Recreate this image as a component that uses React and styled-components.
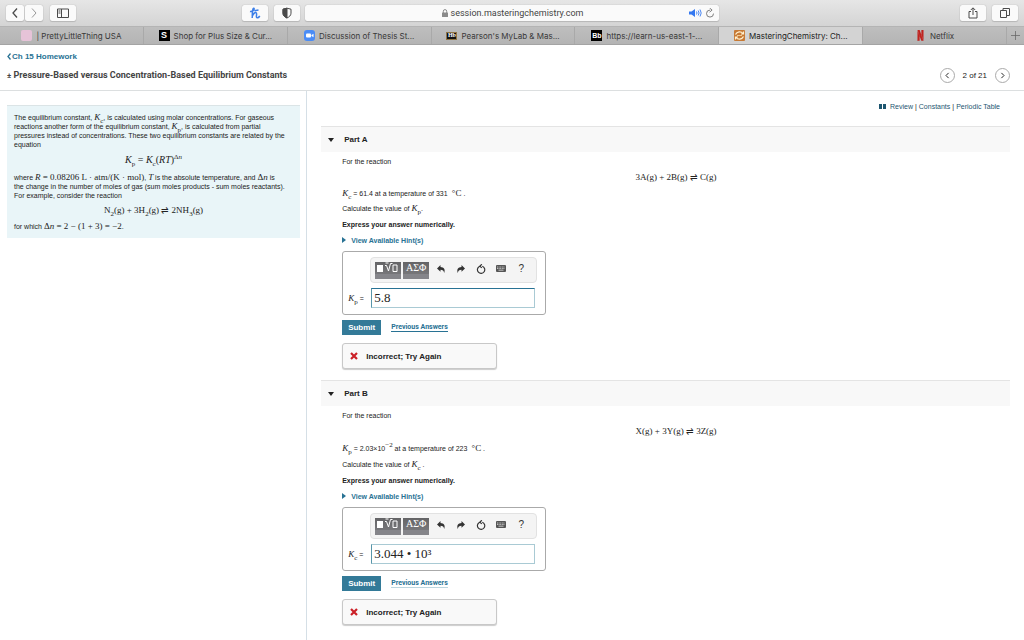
import React from 'react';
import styled, { createGlobalStyle } from 'styled-components';
import { SiNetflix } from 'react-icons/si';

const sans = '"Liberation Sans", Arial, sans-serif';
const serif = '"Liberation Serif", "Times New Roman", serif';
const system = 'Inter, "Open Sans", sans-serif';
const narrow = 'Roboto, "Liberation Sans", sans-serif';

const GlobalStyle = createGlobalStyle`
  * {
    box-sizing: border-box;
  }
  body {
    margin: 0;
    background: #fff;
    color: #222;
    font-family: ${sans};
    font-size: 7px;
  }
  button {
    border: 0;
    padding: 0;
    background: none;
    color: inherit;
    font: inherit;
    cursor: pointer;
  }
  a {
    text-decoration: none;
  }
  svg {
    display: block;
  }
`;

const Page = styled.div`
  display: flex;
  flex-direction: column;
  min-height: 100vh;
`;

const BrowserBar = styled.div`
  display: grid;
  grid-template-columns: 1fr 41% 1fr;
  gap: 5px;
  padding: 5px 6px;
  background: linear-gradient(#e6e6e6, #d4d4d4);
  border-bottom: 1px solid #b4b4b4;
`;

const BarGroup = styled.div`
  display: flex;
  gap: ${(props) => props.$gap}px;
`;

const BarSide = styled.div`
  display: flex;
  justify-content: ${(props) => props.$justify || 'space-between'};
`;

const BarButton = styled.button`
  display: flex;
  align-items: center;
  justify-content: center;
  width: ${(props) => (props.$narrow ? 18 : 26)}px;
  height: 16px;
  border-radius: 2px;
  background: #fafafa;
  box-shadow: 0 0 1px #999, 0 1px 1px #bbb;
  color: ${(props) => props.$color || '#4a4a4a'};
`;

const AddressBar = styled.div`
  display: flex;
  align-items: center;
  height: 16px;
  padding: 0 4px;
  gap: 3px;
  border-radius: 2px;
  background: #fafafa;
  box-shadow: 0 0 1px #999, 0 1px 1px #bbb;
  color: #666;
`;

const Address = styled.div`
  flex: 1;
  display: flex;
  align-items: center;
  justify-content: center;
  gap: 3px;
  padding-left: 30px;
  font: 9px/16px ${narrow};
  color: #444;
`;

const Tabs = styled.nav`
  display: flex;
  height: 18px;
  border-bottom: 1px solid #a4a4a4;
  background: linear-gradient(#bebebe, #b4b4b4);
`;

const Tab = styled.a`
  flex: 1;
  display: flex;
  align-items: center;
  justify-content: center;
  gap: 4px;
  border-right: 1px solid #a9a9a9;
  background: ${(props) => (props.$active ? '#d3d3d3' : 'transparent')};
  color: ${(props) => (props.$active ? '#222' : '#383838')};
  font: 8px/16px ${system};
  white-space: nowrap;
`;

const NewTab = styled.button`
  display: flex;
  align-items: center;
  justify-content: center;
  width: 17px;
  color: #666;
`;

const Favicon = styled.span`
  display: flex;
  align-items: center;
  justify-content: center;
  width: 11px;
  height: ${(props) => props.$height || 11}px;
  border-radius: ${(props) => props.$radius || 0}px;
  border: ${(props) => (props.$border ? `1px solid ${props.$border}` : '0')};
  background: ${(props) => props.$bg || 'transparent'};
  color: #fff;
  font: bold ${(props) => props.$size || 9}px/11px ${(props) => props.$font || sans};
`;

const PageHeader = styled.header`
  display: flex;
  justify-content: space-between;
  height: 46px;
  padding: 6px 14px 0 7px;
  border-bottom: 1px solid #dcdfe0;
`;

const BackLink = styled.a`
  display: flex;
  align-items: center;
  gap: 1px;
  color: #287294;
  font: bold 8px/11px ${sans};
`;

const Title = styled.h1`
  margin: 8px 0 0;
  color: #444;
  font: bold 9px/11px ${narrow};

  span {
    font-size: 8px;
  }
`;

const Pager = styled.div`
  display: flex;
  align-items: center;
  gap: 8px;
  height: 15px;
  margin-top: 17px;
  font-size: 8px;
`;

const PagerButton = styled.button`
  display: flex;
  align-items: center;
  justify-content: center;
  width: 15px;
  height: 15px;
  border: 1px solid #aaa;
  border-radius: 50%;
`;

const Columns = styled.main`
  flex: 1;
  display: grid;
  grid-template-columns: 3fr 7fr;
`;

const Sidebar = styled.aside`
  padding: 14px 6px 0 7px;
  border-right: 1px solid #d5dfe6;
`;

const Intro = styled.section`
  padding: 7px;
  border-top: 1px solid #dbe4e6;
  background: #e9f5f8;
  line-height: 9px;
  white-space: nowrap;

  p {
    margin: 0;
  }
`;

const IntroEquation = styled.div`
  margin: ${(props) => (props.$late ? '5px 0 5px' : '6px 0 6px')};
  text-align: center;
  line-height: 12px;
`;

const MathText = styled.span`
  font-family: ${serif};
  font-size: ${(props) => props.$size || 9}px;
  line-height: 1;

  sub,
  sup {
    font-size: 7px;
    line-height: 0;
  }
`;

const Content = styled.div`
  padding: 0 14px;
`;

const Resources = styled.div`
  display: flex;
  align-items: center;
  justify-content: flex-end;
  gap: 2px;
  height: 35px;
  padding: 0 10px 4px 0;

  a {
    color: #1d5670;
  }
  svg {
    margin-right: 2px;
  }
`;

const Part = styled.section`
  margin-bottom: 11px;
`;

const PartHeader = styled.h2`
  margin: 0;
  border-top: 1px solid #e4e4e4;
  background: #f8f8f8;
`;

const PartToggle = styled.button`
  display: flex;
  align-items: center;
  gap: 10px;
  width: 100%;
  height: 25px;
  padding-left: 7px;
  font: bold 8px/12px ${sans};
`;

const PartBody = styled.div`
  padding: 2px 0 0 21px;
`;

const Line = styled.p`
  margin: 0;
  height: ${(props) => props.$height || 16}px;
  line-height: ${(props) => props.$height || 16}px;
  font-weight: ${(props) => (props.$bold ? 'bold' : 'normal')};
  text-align: ${(props) => (props.$center ? 'center' : 'left')};
`;

const HintToggle = styled.button`
  display: flex;
  align-items: center;
  gap: 5px;
  height: 16px;
  color: #287294;
  font-weight: bold;
`;

const Editor = styled.div`
  display: grid;
  grid-template-columns: 22px 167px;
  row-gap: 5px;
  align-items: center;
  width: fit-content;
  margin-top: 3px;
  padding: 5px 8px 6px 5px;
  border: 1px solid #aaa;
  border-radius: 3px;
`;

const EditorTools = styled.div`
  grid-column: 2;
  display: flex;
  align-items: center;
  height: 26px;
  padding-left: 4px;
  border: 1px solid #e2e2e2;
  border-radius: 4px;
  background: #f4f4f4;
`;

const Palette = styled.button`
  width: 26px;
  height: 17px;
  margin-right: 2px;
  border-bottom: 5px solid #85858a;
  background: linear-gradient(#646466, #77777a);
  color: #fff;
  font: 10px/11px ${serif};
  overflow: hidden;
`;

const Tool = styled.button`
  display: flex;
  align-items: center;
  justify-content: center;
  width: 20px;
  height: 18px;
  padding-bottom: 3px;
  color: #333;
  font-size: 10px;
`;

const AnswerInput = styled.input`
  width: 164px;
  height: 20px;
  margin-left: 1px;
  padding: 0 2px;
  border: 1px solid #a9cad4;
  border-top-color: ${(props) => (props.$active ? '#287294' : '#a9cad4')};
  border-left-color: #5896aa;
  border-radius: 0;
  outline: 0;
  background: #fff;
  color: #222;
  font: 13px/18px ${serif};
`;

const Actions = styled.div`
  display: flex;
  align-items: center;
  gap: 10px;
  margin-top: 5px;
`;

const Submit = styled.button`
  width: 39px;
  height: 15px;
  background: #337a98;
  color: #fff;
  font-size: 8px;
  font-weight: bold;
`;

const Previous = styled.a`
  border-bottom: 1px solid ${(props) => (props.$active ? '#287294' : '#bcd6df')};
  color: #287294;
  font: bold 7px/7px ${narrow};
`;

const Feedback = styled.div`
  display: flex;
  align-items: center;
  gap: 8px;
  width: 155px;
  height: 26px;
  margin-top: 8px;
  padding-left: 7px;
  border: 1px solid #c8c8c8;
  border-radius: 3px;
  background: #f9f9f9;
  box-shadow: 0 1px 1px #ccc;
  font-size: 8px;
  font-weight: bold;
`;

function Stroke({ d, size = 12, width = 1 }) {
  return (
    <svg width={size} height={size} viewBox="0 0 12 12" fill="none" stroke="currentColor" strokeWidth={width} aria-hidden="true">
      <path d={d} />
    </svg>
  );
}

function Shield() {
  return (
    <svg width="12" height="12" viewBox="0 0 12 12" fill="none" stroke="currentColor" aria-hidden="true">
      <path d="M6 1.2 10 2.2v4C10 8.5 8.2 10 6 11 3.8 10 2 8.5 2 6.2v-4z" />
      <path d="M6 1.2V11C3.8 10 2 8.5 2 6.2v-4z" fill="currentColor" />
    </svg>
  );
}

function Camera() {
  return (
    <svg width="9" height="9" viewBox="0 0 9 9" fill="#fff" aria-hidden="true">
      <rect x="1" y="2.5" width="5" height="4" rx="1" />
      <path d="M6.5 4 8.5 2.7v3.6L6.5 5z" />
    </svg>
  );
}

function ChemistryLogo() {
  return (
    <svg width="11" height="11" viewBox="0 0 11 11" aria-hidden="true">
      <rect width="11" height="11" rx="1" fill="#c77a35" />
      <path d="M1.5 4.5C3 1.3 7 1 9 3.5M9.5 1.5V4H7M9.5 6.5C8 9.700 4 10 2 7.500M1.500 9.500V7H4" fill="none" stroke="#fff0cf" strokeWidth="1.2" />
      <path d="M3 5.5h5" stroke="#f3c88e" />
    </svg>
  );
}

function BrowserToolbar() {
  return (
    <BrowserBar>
      <BarSide>
        <BarGroup $gap={7}>
          <BarGroup $gap={1}>
            <BarButton $narrow aria-label="Back"><Stroke width={1.3} d="M8 1.5 4 6l4 4.5" /></BarButton>
            <BarButton $narrow $color="#999" aria-label="Forward"><Stroke d="M4 1.5 8 6l-4 4.5" /></BarButton>
          </BarGroup>
          <BarButton aria-label="Sidebar"><Stroke d="M.5 2h11v8.500H.5zM4.500 2v8.500M1.500 4h2M1.500 6h2" /></BarButton>
        </BarGroup>
        <BarGroup $gap={6}>
          <BarButton $color="#3c7fe8" aria-label="Honey">
            <Stroke width={1.5} d="M1 4.500C3 5 5.800 2.800 5 1.300 4 .3 3.200 4 3.200 11M3.200 9.500C4 7 6 5 7.200 5.800 8.500 7 6.300 10.500 8 10.800 9.200 11 10.300 9.800 10.800 9M5.500 3.800 9.500 3" />
          </BarButton>
          <BarButton aria-label="Privacy"><Shield /></BarButton>
        </BarGroup>
      </BarSide>
      <AddressBar>
        <Address>
          <svg width="6" height="8" viewBox="0 0 6 8" aria-hidden="true">
            <rect y="3.5" width="6" height="4.5" rx="0.5" fill="#8a8a8a" />
            <path d="M1.3 4V2.300a1.700 1.700 0 0 1 3.400 0V4" fill="none" stroke="#8a8a8a" />
          </svg>
          session.masteringchemistry.com
        </Address>
        <svg width="13" height="10" viewBox="0 0 13 10" aria-label="Audio playing">
          <path d="M0 3.500h2.500L6 1v8L2.500 6.500H0z" fill="#3478f0" />
          <path d="M7.500 3.500q1 1.500 0 3M9.200 2.500q1.800 2.500 0 5M11 1.500q2.400 3.500 0 7" fill="none" stroke="#3478f0" strokeWidth="0.9" />
        </svg>
        <Stroke size={10} d="M6 2.500A4.200 4.200 0 1 0 10.200 6.700M5.500 0l3 2.500L5.500 5" />
      </AddressBar>
      <BarSide $justify="flex-end">
        <BarGroup $gap={6}>
          <BarButton aria-label="Share"><Stroke d="M4 4.500H2V11h8V4.500H8M6 8V1M3.800 3 6 .8 8.200 3" /></BarButton>
          <BarButton aria-label="Show tabs"><Stroke d="M1.500 3.500h6v7h-6zM4 3.500v-2h6.500v7h-3" /></BarButton>
        </BarGroup>
      </BarSide>
    </BrowserBar>
  );
}

function BrowserTabs() {
  return (
    <Tabs>
      <Tab href="#thing"><Favicon $bg="#e6c3d8" $radius={2} /> | PrettyLittleThing USA</Tab>
      <Tab href="#shop"><Favicon $bg="#000">S</Favicon> Shop for Plus Size &amp; Cur...</Tab>
      <Tab href="#thesis"><Favicon $bg="#4a8cf6" $radius={3}><Camera /></Favicon> Discussion of Thesis St...</Tab>
      <Tab href="#pearson"><Favicon $bg="#111" $border="#8f7445" $height={8} $size={6} $font={serif}>Hb</Favicon> Pearson's MyLab &amp; Mas...</Tab>
      <Tab href="#learn"><Favicon $bg="#000" $size={7}>Bb</Favicon> https://learn-us-east-1-...</Tab>
      <Tab href="#chemistry" $active><Favicon><ChemistryLogo /></Favicon> MasteringChemistry: Ch...</Tab>
      <Tab href="#netflix"><Favicon><SiNetflix size={11} color="#c0231f" /></Favicon> Netflix</Tab>
      <NewTab aria-label="New tab"><Stroke size={9} d="M6 0v12M0 6h12" /></NewTab>
    </Tabs>
  );
}

function K({ sub }) {
  return <><i>K</i><sub>{sub}</sub></>;
}

function IntroPanel() {
  return (
    <Sidebar>
      <Intro>
        <p>
          The equilibrium constant, <MathText><K sub="c" /></MathText>, is calculated using molar concentrations. For gaseous<br />
          reactions another form of the equilibrium constant, <MathText><K sub="p" /></MathText>, is calculated from partial<br />
          pressures instead of concentrations. These two equilibrium constants are related by the<br />
          equation
        </p>
        <IntroEquation>
          <MathText $size={10}><K sub="p" /> = <K sub="c" />(<i>RT</i>)<sup>Δ<i>n</i></sup></MathText>
        </IntroEquation>
        <p>
          where <MathText><i>R</i> = 0.08206 L · atm/(K · mol)</MathText>, <MathText><i>T</i></MathText> is the absolute temperature, and <MathText>Δ<i>n</i></MathText> is<br />
          the change in the number of moles of gas (sum moles products - sum moles reactants).<br />
          For example, consider the reaction
        </p>
        <IntroEquation $late>
          <MathText>N<sub>2</sub>(g) + 3H<sub>2</sub>(g) ⇌ 2NH<sub>3</sub>(g)</MathText>
        </IntroEquation>
        <p>for which <MathText>Δ<i>n</i> = 2 − (1 + 3) = −2</MathText>.</p>
      </Intro>
    </Sidebar>
  );
}

function Problem({ name, reaction, given, find, answer, tall, active }) {
  const id = `answer-${name}`;
  return (
    <Part>
      <PartHeader>
        <PartToggle aria-expanded="true">
          <svg width="6" height="4" viewBox="0 0 6 4" aria-hidden="true"><path d="M0 0h6L3 4z" fill="#222" /></svg>
          Part {name}
        </PartToggle>
      </PartHeader>
      <PartBody>
        <Line>For the reaction</Line>
        <Line $center><MathText>{reaction}</MathText></Line>
        <Line $height={tall ? 17 : 15}>{given}</Line>
        <Line>Calculate the value of <MathText><K sub={find} /></MathText>{tall ? ' .' : '.'}</Line>
        <Line $bold $height={15}>Express your answer numerically.</Line>
        <HintToggle aria-expanded="false">
          <svg width="4" height="6" viewBox="0 0 4 6" aria-hidden="true"><path d="M0 0l4 3-4 3z" fill="#287294" /></svg>
          View Available Hint(s)
        </HintToggle>
        <Editor>
          <EditorTools>
            <Palette aria-label="Templates">
              <svg width="26" height="12" viewBox="0 0 26 12" fill="none" stroke="#fff" aria-hidden="true">
                <rect x="2" y="3" width="6" height="7" fill="#fff" stroke="none" />
                <path d="M10 3.500h1.500l2 5.500L15.500 1.500h2M10.500 1h3" />
                <path d="M18 3h4v6.500h-4z" />
              </svg>
            </Palette>
            <Palette aria-label="Symbols">ΑΣΦ</Palette>
            <Tool aria-label="Undo">
              <svg width="10" height="10" viewBox="0 0 10 10" aria-hidden="true"><path d="M4.500 1v2C8 3.200 9.500 5.500 8.200 9 7.800 6.800 6.800 5.800 4.500 5.800v2L1 4.400z" fill="currentColor" /></svg>
            </Tool>
            <Tool aria-label="Redo">
              <svg width="10" height="10" viewBox="0 0 10 10" aria-hidden="true"><path d="M5.500 1v2C2 3.200.5 5.500 1.800 9 2.200 6.800 3.200 5.800 5.500 5.800v2L9 4.400z" fill="currentColor" /></svg>
            </Tool>
            <Tool aria-label="Reset"><Stroke size={10} width={1.4} d="M7.500 2.700A4.400 4.400 0 1 1 4 3M7 .3 4.500 2.700 7 4.700" /></Tool>
            <Tool aria-label="Keyboard">
              <svg width="10" height="7" viewBox="0 0 10 7" aria-hidden="true">
                <rect width="10" height="7" rx="1" fill="#555" />
                <path d="M1 2h8M1 3.500h8" stroke="#ddd" strokeWidth="0.8" strokeDasharray="1 .6" />
                <path d="M2.500 5.200h5" stroke="#ddd" strokeWidth="0.8" />
              </svg>
            </Tool>
            <Tool aria-label="Help">?</Tool>
          </EditorTools>
          <label htmlFor={id}><MathText><K sub={find} /></MathText> =</label>
          <AnswerInput id={id} defaultValue={answer} $active={active} />
        </Editor>
        <Actions>
          <Submit>Submit</Submit>
          <Previous href="#previous" $active={active}>Previous Answers</Previous>
        </Actions>
        <Feedback>
          <svg width="8" height="8" viewBox="0 0 8 8" aria-hidden="true"><path d="M1 1l6 6M7 1 1 7" stroke="#cb2027" strokeWidth="2.2" /></svg>
          Incorrect; Try Again
        </Feedback>
      </PartBody>
    </Part>
  );
}

export default function App() {
  return (
    <Page>
      <GlobalStyle />
      <BrowserToolbar />
      <BrowserTabs />
      <PageHeader>
        <div>
          <BackLink href="#homework">
            <svg width="4" height="7" viewBox="0 0 4 7" aria-hidden="true"><path d="M3.500.5 1 3.500l2.500 3" fill="none" stroke="#287294" strokeWidth="1.3" /></svg>
            Ch 15 Homework
          </BackLink>
          <Title><span>±</span> Pressure-Based versus Concentration-Based Equilibrium Constants</Title>
        </div>
        <Pager>
          <PagerButton aria-label="Previous item"><Stroke size={9} width={1.3} d="M7.500 2.500 4 6l3.500 3.500" /></PagerButton>
          2 of 21
          <PagerButton aria-label="Next item"><Stroke size={9} width={1.3} d="M4.500 2.500 8 6 4.500 9.500" /></PagerButton>
        </Pager>
      </PageHeader>
      <Columns>
        <IntroPanel />
        <Content>
          <Resources>
            <svg width="7" height="5" viewBox="0 0 7 5" aria-hidden="true"><path d="M0 0h3v5H0zM4 0h3v5H4z" fill="#1d5670" /></svg>
            <a href="#review">Review</a> | <a href="#constants">Constants</a> | <a href="#table">Periodic Table</a>
          </Resources>
          <Problem
            name="A"
            reaction="3A(g) + 2B(g) ⇌ C(g)"
            given={<><MathText><K sub="c" /></MathText> = 61.4 at a temperature of 331 <MathText>&nbsp;°C</MathText> .</>}
            find="p"
            answer="5.8"
            active
          />
          <Problem
            name="B"
            reaction="X(g) + 3Y(g) ⇌ 3Z(g)"
            given={<><MathText><K sub="p" /></MathText> = 2.03×10<MathText><sup>−2</sup></MathText> at a temperature of 223 <MathText>&nbsp;°C</MathText> .</>}
            find="c"
            answer="3.044 • 10³"
            tall
          />
        </Content>
      </Columns>
    </Page>
  );
}
